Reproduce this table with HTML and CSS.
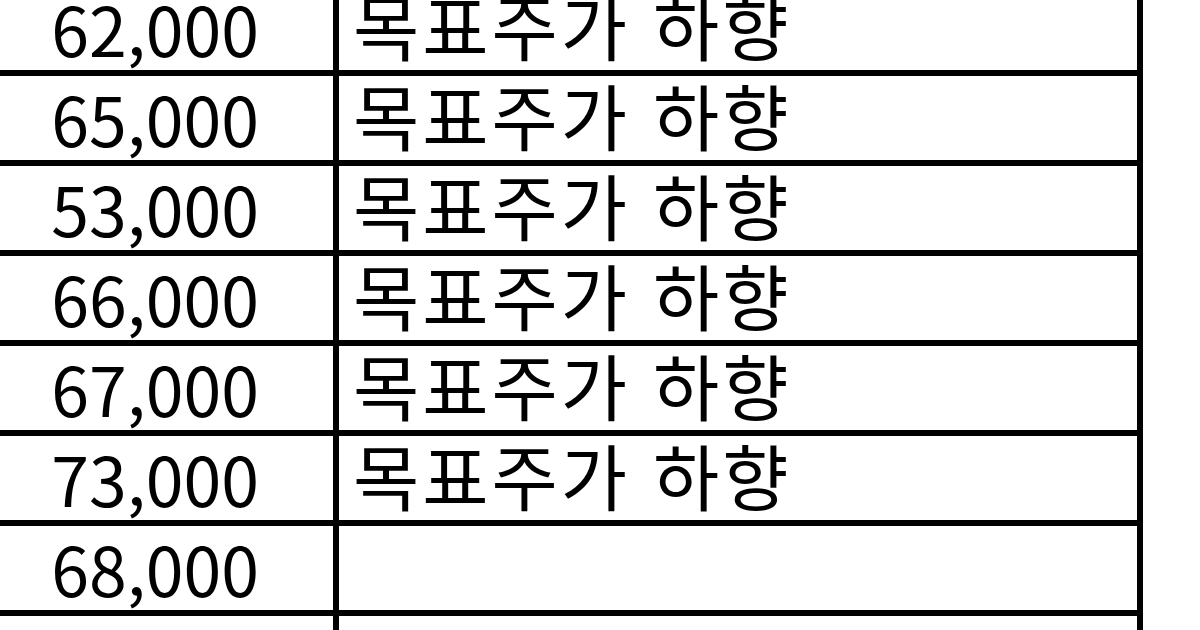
FILE: index.html
```html
<!DOCTYPE html>
<html lang="ko">
<head>
<meta charset="utf-8">
<title>목표주가</title>
<link rel="stylesheet" href="styles.css">
</head>
<body>
<div class="sheet">
  <div class="row"><div class="cell num">62,000</div><div class="cell note">목표주가 하향</div></div>
  <div class="row"><div class="cell num">65,000</div><div class="cell note">목표주가 하향</div></div>
  <div class="row"><div class="cell num">53,000</div><div class="cell note">목표주가 하향</div></div>
  <div class="row"><div class="cell num">66,000</div><div class="cell note">목표주가 하향</div></div>
  <div class="row"><div class="cell num">67,000</div><div class="cell note">목표주가 하향</div></div>
  <div class="row"><div class="cell num">73,000</div><div class="cell note">목표주가 하향</div></div>
  <div class="row"><div class="cell num">68,000</div><div class="cell note"></div></div>
  <div class="row"><div class="cell num"></div><div class="cell note"></div></div>
</div>
</body>
</html>
```
FILE: styles.css
```css
html, body {
  margin: 0;
  padding: 0;
  background: #ffffff;
  overflow: hidden;
}
body {
  width: 1200px;
  height: 630px;
  font-family: "Noto Sans CJK KR", "Noto Sans", sans-serif;
  color: #000000;
}
.sheet {
  margin-top: -14px;
  width: 1143px;
  border-right: 6px solid #000000;
  box-sizing: border-box;
}
.row {
  display: grid;
  grid-template-columns: 339px 1fr;
  height: 90px;
  box-sizing: border-box;
  border-bottom: 6px solid #000000;
}
.cell {
  display: flex;
  align-items: center;
  font-size: 68px;
  line-height: 68px;
  white-space: nowrap;
}
.num {
  justify-content: flex-end;
  border-right: 6px solid #000000;
  padding-right: 74px;
}
.note {
  padding-left: 14px;
  padding-bottom: 8px;
  box-sizing: border-box;
  font-size: 72px;
  line-height: 72px;
  letter-spacing: 3px;
}
```
